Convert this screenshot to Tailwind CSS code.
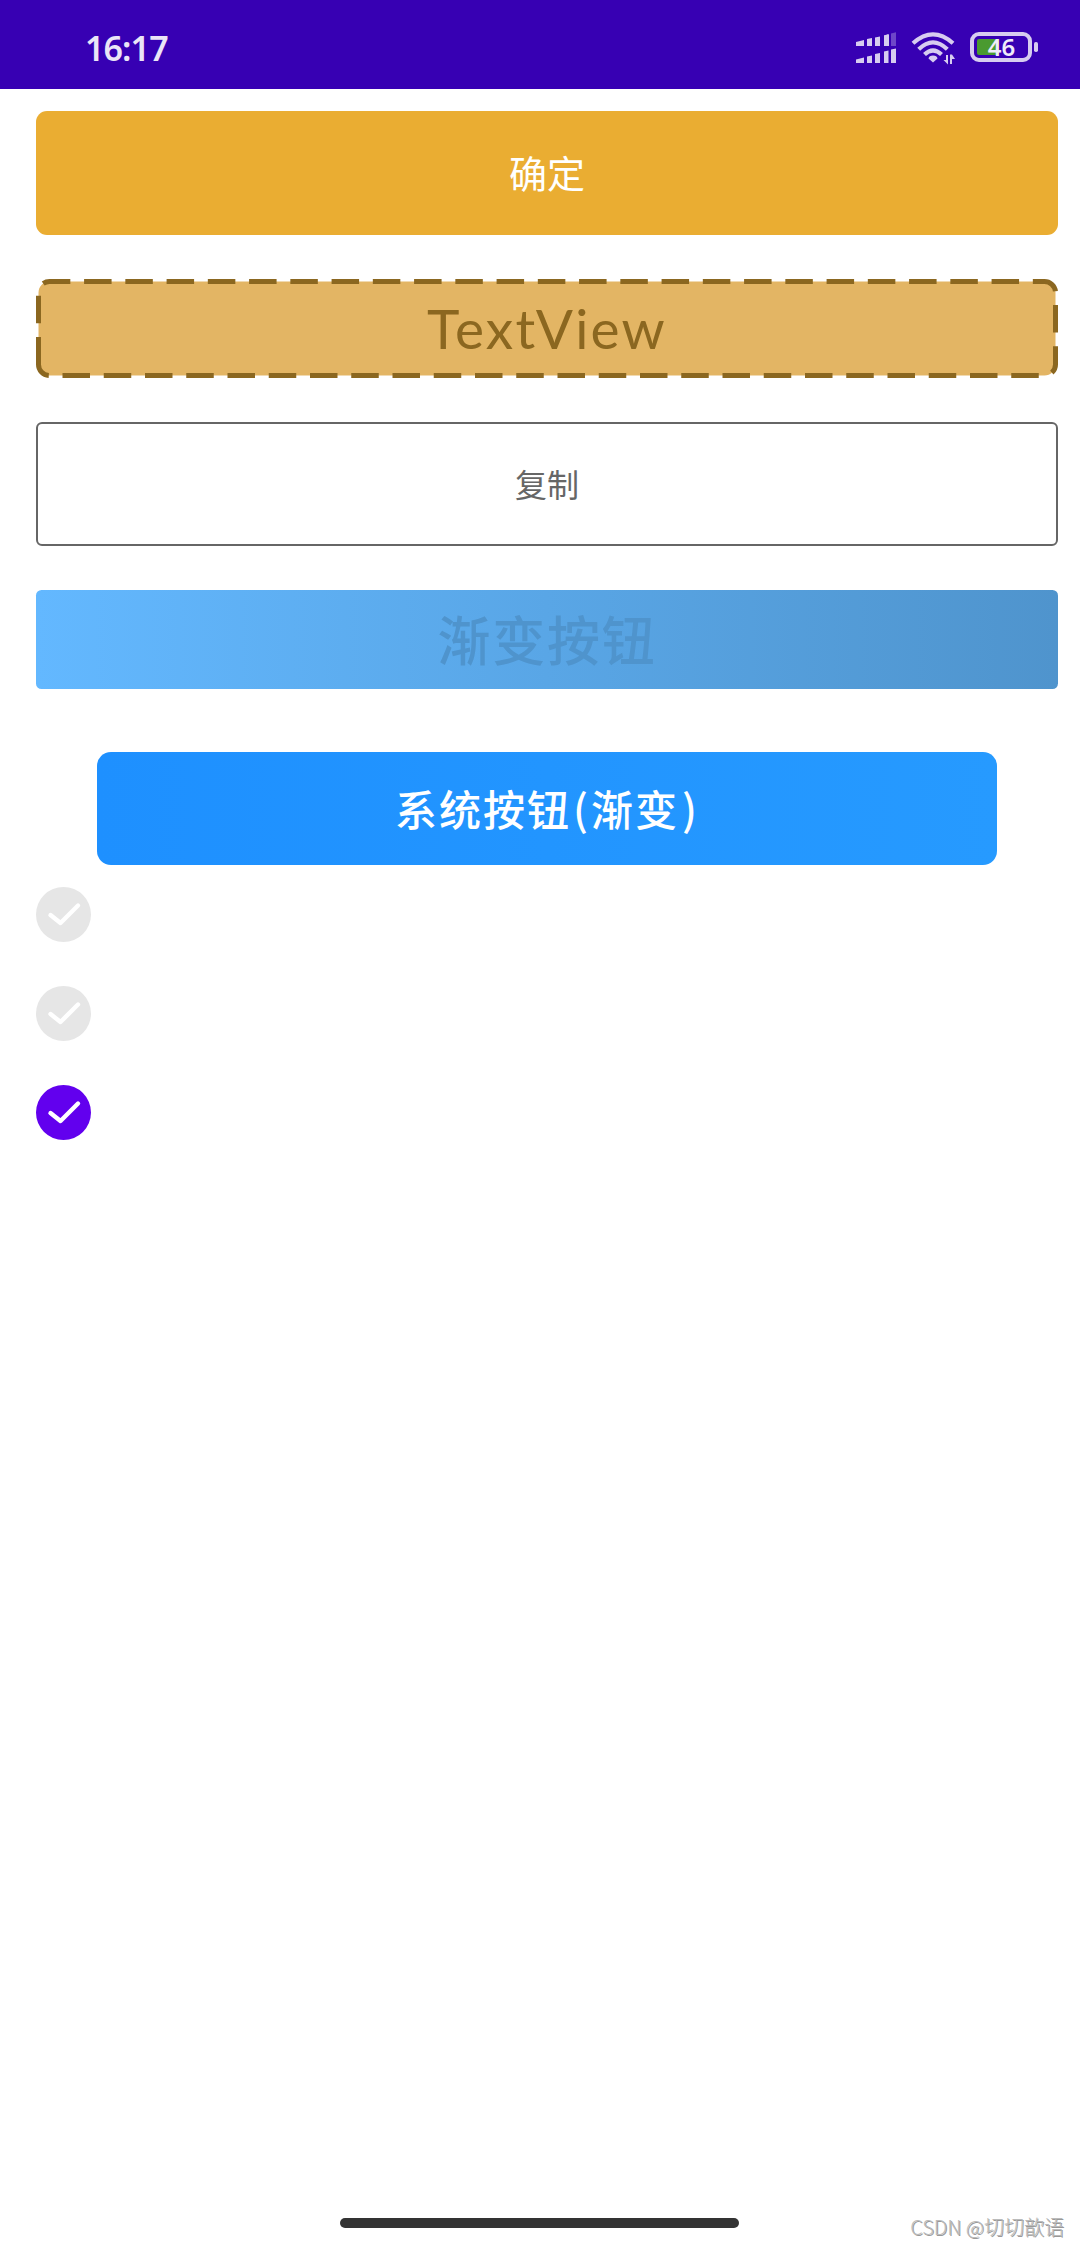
<!DOCTYPE html>
<html lang="zh-CN">
<head>
<meta charset="utf-8">
<title>Buttons</title>
<script src="https://cdn.jsdelivr.net/npm/@tailwindcss/browser@4"></script>
</head>
<body class="bg-white">
<div class="flex h-[2248px] w-[1080px] flex-col overflow-hidden bg-white font-['Noto_Sans_CJK_SC',sans-serif]">
  <header class="flex h-[89px] shrink-0 items-center justify-between bg-[#3700b3] pr-[40px] pl-[85px]">
    <div class="pt-[6px] font-['Noto_Sans',sans-serif] text-[34px] leading-none font-semibold tracking-[-0.9px] text-[#ebe5f7]">16:17</div>
    <svg class="mt-[11px] h-[60px] w-[190px]" viewBox="850 20 190 60" fill="#d7ccf0">
      <path d="M856 42l8-2v6h-8zM867 39l5-1v8h-5zM875 37.500l5-1V46h-5zM884 35.500l5-1V46h-5z"/>
      <path d="M856 59.500l8-2V63h-8zM867 56.500l5-1V63h-5zM875 54l5-1v10h-5zM884 51.500l4.500-1V63H884zM891 49.500l5-1V63h-5z"/>
      <path d="M884 35.500l4.500-1.500V46H884z"/>
      <path d="M891 33.500l5-1.200V46h-5z" opacity=".35"/>
      <g fill="none" stroke="#d7ccf0" stroke-width="4.200" stroke-linecap="butt">
        <path d="M913 43.200Q933 25.500 953 43.200"/><path d="M918.700 49.200Q933 35.500 947.300 49.200"/><path d="M924.500 54.500Q933 46.500 941.500 54.500"/>
      </g>
      <path d="M933 62.500l-4.500-4Q929 55.500 933 55.500t4.500 3z"/>
      <path d="M946 55h2v9.500l-4.500-4.500h2.500zM950 54.500h2l3 4.500h-3v5h-2z"/>
      <rect x="972" y="34" width="58" height="26" rx="7" fill="none" stroke="#d7ccf0" stroke-width="4"/>
      <path d="M979 39h20v16h-20q-2 0-2-2V41q0-2 2-2z" fill="#4a9a30"/>
      <rect x="1034" y="42" width="4" height="10" rx="1.800"/>
      <text x="1001.500" y="56" text-anchor="middle" fill="#f0ebfa" class="font-['Noto_Sans',sans-serif] text-[24px] font-semibold">46</text>
    </svg>
  </header>

  <main class="flex flex-col pt-[22px] pr-[22px] pl-[36px]">
    <button class="flex h-[124px] items-center justify-center rounded-[11px] bg-[#eaad32] pb-[3px] text-[38px] leading-none text-white">确定</button>

    <div class="relative mt-[44px] flex h-[99px] items-center justify-center">
      <svg class="absolute inset-0 h-[99px] w-[1022px]" viewBox="36 279 1022 99">
        <path d="M38.500 364.500V292.500A11 11 0 0 1 49.500 281.500H1044.500A11 11 0 0 1 1055.500 292.500V364.500A11 11 0 0 1 1044.500 375.500H49.500A11 11 0 0 1 38.500 364.500Z" fill="#e3b564"/>
        <path d="M38.500 364.500V292.500A11 11 0 0 1 49.500 281.500H1044.500A11 11 0 0 1 1055.500 292.500V364.500A11 11 0 0 1 1044.500 375.500H49.500A11 11 0 0 1 38.500 364.500" fill="none" stroke="#8b6720" stroke-width="5" stroke-dasharray="27.500 13.750"/>
      </svg>
      <span class="relative font-[Lato,sans-serif] text-[55px] leading-none tracking-[2.200px] text-[#8b6720]">TextView</span>
    </div>

    <button class="mt-[44px] flex h-[124px] items-center justify-center rounded-[6px] border-2 border-[#666] pb-[2px] text-[32px] leading-none text-[#666]">复制</button>

    <button class="mt-[44px] flex h-[99px] items-center justify-center rounded-[5.500px] bg-linear-to-r/srgb from-[#63b8ff] to-[#4f94cd] pb-[2px] text-[53px] leading-none font-medium tracking-[1.800px] text-[#4f94cd]">渐变按钮</button>

    <button class="mt-[63px] flex h-[113px] w-[900px] items-center justify-center self-center rounded-[14px] bg-linear-to-r/srgb from-[#1e90ff] to-[#269aff] pb-[2px] text-[42px] leading-none font-medium tracking-[2px] text-white">系统按钮<span class="pr-px pl-[2px]">(</span>渐变<span class="pl-[3px]">)</span></button>

    <div class="mt-[22px] flex flex-col gap-[44px]">
      <svg class="size-[55px]" viewBox="0 0 55 55"><circle cx="27.500" cy="27.500" r="27.500" fill="#e6e6e6"/><path d="M14.500 28l10 8 17.500-17.500" fill="none" stroke="#fff" stroke-width="4.400" stroke-linecap="round" stroke-linejoin="round"/></svg>
      <svg class="size-[55px]" viewBox="0 0 55 55"><circle cx="27.500" cy="27.500" r="27.500" fill="#e6e6e6"/><path d="M14.500 28l10 8 17.500-17.500" fill="none" stroke="#fff" stroke-width="4.400" stroke-linecap="round" stroke-linejoin="round"/></svg>
      <svg class="size-[55px]" viewBox="0 0 55 55"><circle cx="27.500" cy="27.500" r="27.500" fill="#6200ee"/><path d="M14.500 28l10 8 17.500-17.500" fill="none" stroke="#fff" stroke-width="4.400" stroke-linecap="round" stroke-linejoin="round"/></svg>
    </div>
  </main>

  <footer class="relative mt-auto flex h-[30px] shrink-0 pl-[340px]">
    <div class="h-[10px] w-[399px] rounded-[5px] bg-[#333]"></div>
    <div class="absolute top-[-1px] right-[16px] text-[20px] leading-[20px] font-light whitespace-nowrap text-[#bbb] [text-shadow:1px_1px_0_#999]">CSDN @切切歆语</div>
  </footer>
</div>
</body>
</html>
